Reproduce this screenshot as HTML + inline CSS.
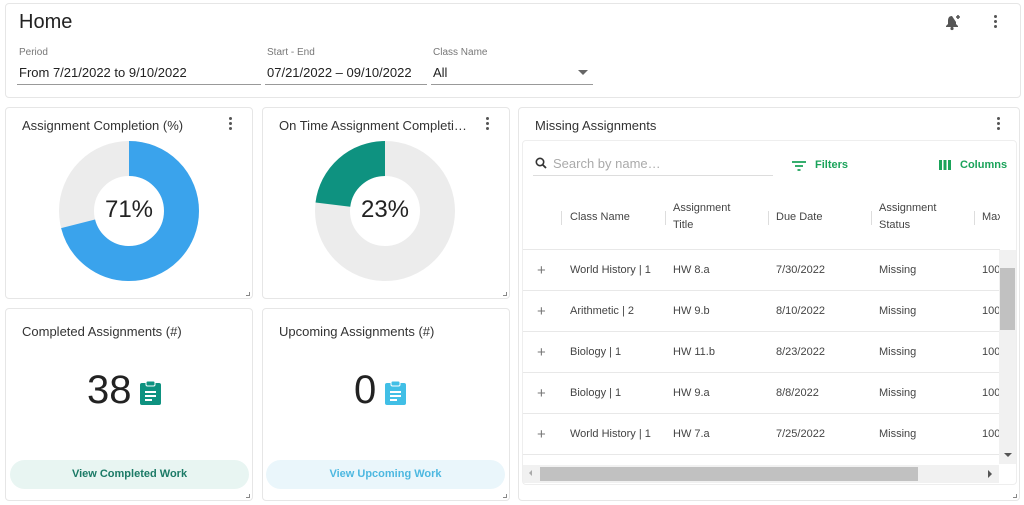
<!DOCTYPE html>
<html><head><style>
*{box-sizing:border-box;margin:0;padding:0}
body{width:1024px;height:505px;background:#fff;font-family:"Liberation Sans",sans-serif;color:#333;position:relative;overflow:hidden}
.card{position:absolute;border:1px solid #e6e6e6;border-radius:4px;background:#fff}
.abs{position:absolute;white-space:nowrap}
.lbl{font-size:10px;color:#777}
.val{font-size:13px;color:#222}
.line{position:absolute;height:1px;background:#999}
.dots{position:absolute;width:3px}
.dots i{display:block;width:3px;height:3px;border-radius:50%;background:#555;margin-bottom:2px}
.title{font-size:13px;color:#333}
.th{font-size:11px;color:#444;line-height:17px}
.td{font-size:11px;color:#444}
.sep{position:absolute;width:1px;height:14px;background:#ddd}
.rl{position:absolute;left:523px;width:477px;height:1px;background:#e8e8e8}
.corner{position:absolute;width:4px;height:4px;border-right:1px solid #888;border-bottom:1px solid #888}
</style></head><body>
<div class="card" style="left:5px;top:3px;width:1016px;height:95px"></div>
<div class="abs" style="left:19px;top:11px;font-size:20px;color:#222">Home</div>
<div class="abs lbl" style="left:19px;top:47px">Period</div>
<div class="abs val" style="left:19px;top:65px">From 7/21/2022 to 9/10/2022</div>
<div class="line" style="left:17px;top:84px;width:244px"></div>
<div class="abs lbl" style="left:267px;top:47px">Start - End</div>
<div class="abs val" style="left:267px;top:65px">07/21/2022 – 09/10/2022</div>
<div class="line" style="left:265px;top:84px;width:162px"></div>
<div class="abs lbl" style="left:433px;top:47px">Class Name</div>
<div class="abs val" style="left:433px;top:65px">All</div>
<div class="abs" style="left:578px;top:70px;border-left:5px solid transparent;border-right:5px solid transparent;border-top:5px solid #666"></div>
<div class="line" style="left:431px;top:84px;width:162px"></div>
<svg class="abs" style="left:944px;top:13px" width="18" height="18" viewBox="0 0 18 18"><path d="M8 3c-3 0-4 2-4 5v3l-2 2v1h12v-1l-2-2V9" fill="#555"/><path d="M12 4h4M14 2v4" stroke="#555" stroke-width="1.6"/><circle cx="8" cy="15.5" r="1.6" fill="#555"/></svg>
<div class="dots" style="left:994px;top:15px"><i></i><i></i><i></i></div>

<div class="card" style="left:5px;top:107px;width:248px;height:192px"></div>
<div class="abs title" style="left:22px;top:118px">Assignment Completion (%)</div>
<div class="dots" style="left:229px;top:117px"><i></i><i></i><i></i></div>
<svg class="abs" style="left:59px;top:141px" width="140" height="140" viewBox="0 0 140 140">
<circle cx="70" cy="70" r="52.5" fill="none" stroke="#ececec" stroke-width="35"/>
<circle cx="70" cy="70" r="52.5" fill="none" stroke="#3aa3ec" stroke-width="35" stroke-dasharray="234.2 400" transform="rotate(-90 70 70)"/>
</svg>
<div class="abs" style="left:59px;top:196px;width:140px;text-align:center;font-size:24px;color:#222">71%</div>
<div class="corner" style="left:246px;top:292px"></div>

<div class="card" style="left:262px;top:107px;width:248px;height:192px"></div>
<div class="abs title" style="left:279px;top:118px">On Time Assignment Completi…</div>
<div class="dots" style="left:486px;top:117px"><i></i><i></i><i></i></div>
<svg class="abs" style="left:315px;top:141px" width="140" height="140" viewBox="0 0 140 140">
<circle cx="70" cy="70" r="52.5" fill="none" stroke="#ececec" stroke-width="35"/>
<circle cx="70" cy="70" r="52.5" fill="none" stroke="#0e9280" stroke-width="35" stroke-dasharray="75.9 400" transform="rotate(-90 70 70) scale(1,-1) translate(0,-140)"/>
</svg>
<div class="abs" style="left:315px;top:196px;width:140px;text-align:center;font-size:24px;color:#222">23%</div>
<div class="corner" style="left:503px;top:292px"></div>

<div class="card" style="left:5px;top:308px;width:248px;height:193px"></div>
<div class="abs title" style="left:22px;top:324px">Completed Assignments (#)</div>
<div class="abs" style="left:87px;top:368px;font-size:40px;color:#222">38</div>
<svg class="abs" style="left:140px;top:381px" width="22" height="24" viewBox="0 0 22 24"><rect x="0" y="2" width="21" height="22" rx="2" fill="#0e9280"/><rect x="6" y="0" width="9" height="5" rx="1.5" fill="#0e9280" stroke="#fff" stroke-width="1"/><path d="M5 11h11M5 15h11M5 19h7" stroke="#fff" stroke-width="2"/></svg>
<div class="abs" style="left:10px;top:460px;width:239px;height:29px;border-radius:15px;background:#e8f5f2;text-align:center;line-height:29px;font-size:11px;font-weight:bold;color:#1b7a66">View Completed Work</div>
<div class="corner" style="left:246px;top:494px"></div>

<div class="card" style="left:262px;top:308px;width:248px;height:193px"></div>
<div class="abs title" style="left:279px;top:324px">Upcoming Assignments (#)</div>
<div class="abs" style="left:354px;top:368px;font-size:40px;color:#222">0</div>
<svg class="abs" style="left:385px;top:381px" width="22" height="24" viewBox="0 0 22 24"><rect x="0" y="2" width="21" height="22" rx="2" fill="#41bfe6"/><rect x="6" y="0" width="9" height="5" rx="1.5" fill="#41bfe6" stroke="#fff" stroke-width="1"/><path d="M5 11h11M5 15h11M5 19h7" stroke="#fff" stroke-width="2"/></svg>
<div class="abs" style="left:266px;top:460px;width:239px;height:29px;border-radius:15px;background:#eaf6fb;text-align:center;line-height:29px;font-size:11px;font-weight:bold;color:#4db8e0">View Upcoming Work</div>
<div class="corner" style="left:503px;top:494px"></div>

<div class="card" style="left:518px;top:107px;width:502px;height:394px"></div>
<div class="abs title" style="left:535px;top:118px">Missing Assignments</div>
<div class="dots" style="left:997px;top:117px"><i></i><i></i><i></i></div>
<div class="card" style="left:522px;top:140px;width:495px;height:345px;border-color:#eee"></div>
<svg class="abs" style="left:535px;top:157px" width="12" height="12" viewBox="0 0 12 12"><circle cx="5" cy="5" r="3.7" fill="none" stroke="#333" stroke-width="1.6"/><path d="M7.7 7.7L11 11" stroke="#333" stroke-width="1.8"/></svg>
<div class="abs" style="left:553px;top:156px;font-size:13px;color:#aaa">Search by name…</div>
<div class="abs" style="left:533px;top:175px;width:240px;height:1px;background:#ddd"></div>
<svg class="abs" style="left:792px;top:160px" width="14" height="12" viewBox="0 0 14 12"><path d="M0 2h14M3 6h8M5.5 10h3" stroke="#1aa35a" stroke-width="1.8"/></svg>
<div class="abs" style="left:815px;top:159px;font-size:11px;font-weight:bold;color:#1aa35a">Filters</div>
<svg class="abs" style="left:939px;top:160px" width="12" height="10"><rect x="0" y="0" width="3" height="10" fill="#1aa35a"/><rect x="4.5" y="0" width="3" height="10" fill="#1aa35a"/><rect x="9" y="0" width="3" height="10" fill="#1aa35a"/></svg>
<div class="abs" style="left:960px;top:159px;font-size:11px;font-weight:bold;color:#1aa35a">Columns</div>

<div class="sep" style="left:561px;top:211px"></div>
<div class="abs th" style="left:570px;top:209px">Class Name</div>
<div class="sep" style="left:665px;top:211px"></div>
<div class="abs th" style="left:673px;top:200px">Assignment<br>Title</div>
<div class="sep" style="left:768px;top:211px"></div>
<div class="abs th" style="left:776px;top:209px">Due Date</div>
<div class="sep" style="left:871px;top:211px"></div>
<div class="abs th" style="left:879px;top:200px">Assignment<br>Status</div>
<div class="sep" style="left:974px;top:211px"></div>
<div class="abs th" style="left:982px;top:209px;width:18px;overflow:hidden">Max Po</div>

<div class="rl" style="top:249px"></div>
<div class="rl" style="top:290px"></div>
<div class="rl" style="top:331px"></div>
<div class="rl" style="top:372px"></div>
<div class="rl" style="top:413px"></div>
<div class="rl" style="top:454px"></div>

<div class="abs td" style="left:537px;top:262px;font-size:15px;color:#777">+</div><div class="abs td" style="left:570px;top:264px">World History | 1</div><div class="abs td" style="left:673px;top:264px">HW 8.a</div><div class="abs td" style="left:776px;top:264px">7/30/2022</div><div class="abs td" style="left:879px;top:264px">Missing</div><div class="abs td" style="left:982px;top:264px;width:18px;overflow:hidden">100</div>
<div class="abs td" style="left:537px;top:303px;font-size:15px;color:#777">+</div><div class="abs td" style="left:570px;top:305px">Arithmetic | 2</div><div class="abs td" style="left:673px;top:305px">HW 9.b</div><div class="abs td" style="left:776px;top:305px">8/10/2022</div><div class="abs td" style="left:879px;top:305px">Missing</div><div class="abs td" style="left:982px;top:305px;width:18px;overflow:hidden">100</div>
<div class="abs td" style="left:537px;top:344px;font-size:15px;color:#777">+</div><div class="abs td" style="left:570px;top:346px">Biology | 1</div><div class="abs td" style="left:673px;top:346px">HW 11.b</div><div class="abs td" style="left:776px;top:346px">8/23/2022</div><div class="abs td" style="left:879px;top:346px">Missing</div><div class="abs td" style="left:982px;top:346px;width:18px;overflow:hidden">100</div>
<div class="abs td" style="left:537px;top:385px;font-size:15px;color:#777">+</div><div class="abs td" style="left:570px;top:387px">Biology | 1</div><div class="abs td" style="left:673px;top:387px">HW 9.a</div><div class="abs td" style="left:776px;top:387px">8/8/2022</div><div class="abs td" style="left:879px;top:387px">Missing</div><div class="abs td" style="left:982px;top:387px;width:18px;overflow:hidden">100</div>
<div class="abs td" style="left:537px;top:426px;font-size:15px;color:#777">+</div><div class="abs td" style="left:570px;top:428px">World History | 1</div><div class="abs td" style="left:673px;top:428px">HW 7.a</div><div class="abs td" style="left:776px;top:428px">7/25/2022</div><div class="abs td" style="left:879px;top:428px">Missing</div><div class="abs td" style="left:982px;top:428px;width:18px;overflow:hidden">100</div>

<div class="abs" style="left:999px;top:250px;width:17px;height:214px;background:#f1f1f1"></div>
<div class="abs" style="left:1000px;top:268px;width:15px;height:62px;background:#c1c1c1"></div>
<div class="abs" style="left:1004px;top:453px;border-left:4px solid transparent;border-right:4px solid transparent;border-top:4px solid #555"></div>
<div class="abs" style="left:523px;top:465px;width:476px;height:18px;background:#f1f1f1"></div>
<div class="abs" style="left:540px;top:467px;width:378px;height:14px;background:#c1c1c1"></div>
<div class="abs" style="left:529px;top:470px;border-top:3px solid transparent;border-bottom:3px solid transparent;border-right:3px solid #aaa"></div>
<div class="abs" style="left:988px;top:470px;border-top:4px solid transparent;border-bottom:4px solid transparent;border-left:4px solid #555"></div>
<div class="corner" style="left:1013px;top:494px"></div>
</body></html>
